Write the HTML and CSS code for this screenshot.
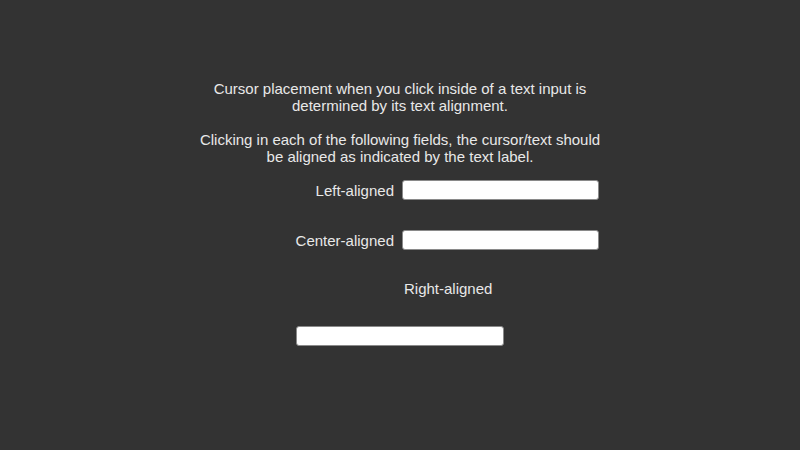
FILE: index.html
```
<!doctype html>
<html lang="en">
	<head>
		<meta charset="UTF-8">
		<meta name="viewport" content="width=device-width, initial-scale=1.0">
		<title>Text input alignment</title>
		<link rel="stylesheet" href="styles.css">
	</head>
	<body>

		<div class="intro">
			<p>Cursor placement when you click inside of a text input is<br>determined by its text alignment.</p>
			<p>Clicking in each of the following fields, the cursor/text should<br>be aligned as indicated by the text label.</p>
		</div>

		<form class="fields">
			<div class="field">
				<label for="f-left">Left-aligned</label>
				<input type="text" id="f-left" class="al-left">
			</div>
			<div class="field">
				<label for="f-center">Center-aligned</label>
				<input type="text" id="f-center" class="al-center">
			</div>
			<div class="field stacked">
				<label for="f-right">Right-aligned</label>
				<input type="text" id="f-right" class="al-right">
			</div>
		</form>

	</body>
</html>
```
FILE: styles.css
```
*{
	box-sizing: border-box;
}

body
{
	margin: 0;
	padding-top: 80px;
	background-color: #333333;
	color: #e8e8e8;
	font-family: "Liberation Sans", Arial, sans-serif;
	font-size: 15px;
}

.intro
{
	text-align: center;
}

.intro p
{
	margin: 0 0 17px 0;
	line-height: 17px;
}

.intro p:last-child
{
	margin-bottom: 0;
}

.fields
{
	width: 400px;
	margin: 15px auto 0 auto;
}

.field
{
	display: flex;
	align-items: center;
	height: 20px;
	margin-bottom: 30px;
}

.field label
{
	flex: 0 0 202px;
	text-align: right;
	padding-right: 8px;
}

input
{
	width: 197px;
	height: 20px;
	padding: 0 3px;
	border: 1px solid #8a8a8a;
	border-radius: 3px;
	background: #ffffff;
	font-family: inherit;
	font-size: 13px;
}

.al-left { text-align: left; }
.al-center { text-align: center; }
.al-right { text-align: right; }

.field.stacked
{
	display: block;
	height: auto;
}

.field.stacked label
{
	display: block;
	text-align: left;
	padding: 0 0 0 204px;
	line-height: 17px;
}

.field.stacked input
{
	display: block;
	width: 208px;
	margin: 29px 0 0 96px;
}
```
